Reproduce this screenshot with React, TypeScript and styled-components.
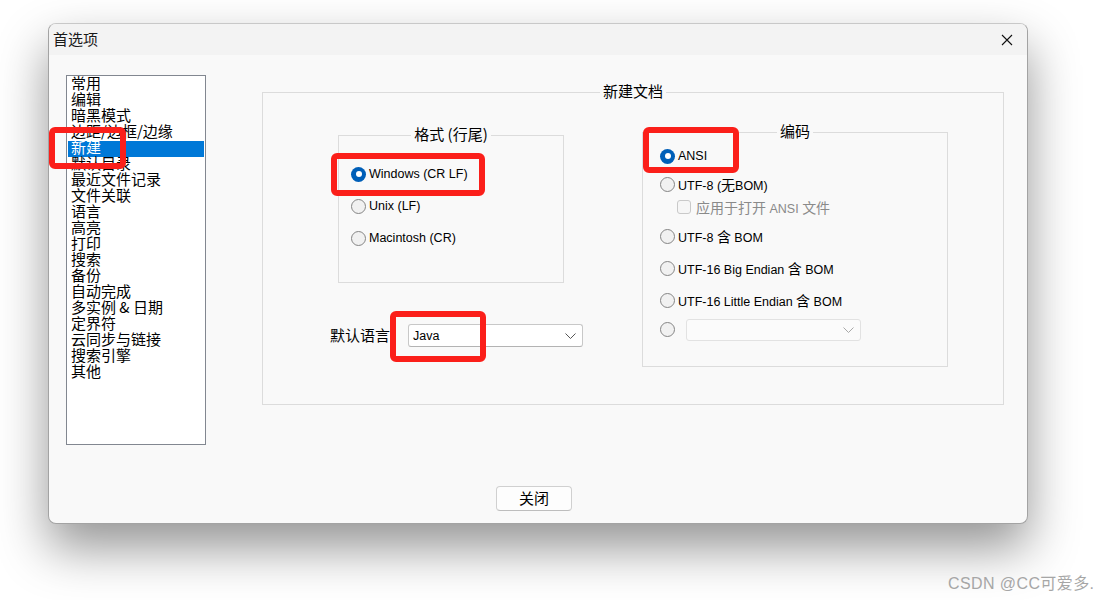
import styled, { createGlobalStyle } from "styled-components";

const GlobalStyle = createGlobalStyle`
  body {
    margin: 0;
    background: #ffffff;
    font-family: "Noto Sans CJK SC", sans-serif;
    color: #000;
  }
`;

const Page = styled.div`
  position: relative;
  width: 1107px;
  height: 600px;
  padding: 23px 0 0 48px;
  box-sizing: border-box;
  overflow: hidden;
`;

const Window = styled.div`
  display: flex;
  flex-direction: column;
  width: 980px;
  height: 501px;
  box-sizing: border-box;
  border: 1px solid #a3a3a3;
  border-top-color: #c8c8c8;
  border-radius: 8px;
  overflow: hidden;
  background: #f9f9f9;
  box-shadow: 0 24px 50px rgba(0, 0, 0, 0.42);
`;

const TitleBar = styled.div`
  display: flex;
  align-items: center;
  justify-content: space-between;
  height: 31px;
  padding: 0 14px 0 4px;
  background: #f3f3f3;
  font-size: 15px;
  color: #1a1a1a;
`;

const TitleText = styled.span`
  line-height: 15px;
  margin-top: -3px;
`;

const CloseIcon = styled.svg`
  width: 12px;
  height: 12px;
`;

const Body = styled.div`
  display: flex;
  flex-direction: column;
  padding-top: 20px;
`;

const TopRow = styled.div`
  display: flex;
  align-items: flex-start;
`;

const ListBox = styled.ul`
  list-style: none;
  margin: 0 0 0 17px;
  padding: 1px;
  width: 140px;
  height: 370px;
  box-sizing: border-box;
  border: 1px solid #828790;
  background: #fff;
`;

const ListItem = styled.li<{ $selected?: boolean }>`
  height: 16px;
  line-height: 12px;
  padding-left: 3px;
  font-size: 15px;
  white-space: nowrap;
  background: ${(p) => (p.$selected ? "#0078d7" : "transparent")};
  color: ${(p) => (p.$selected ? "#fff" : "#000")};
`;

const Group = styled.div<{ $w: number; $h: number }>`
  display: flex;
  flex-direction: column;
  width: ${(p) => p.$w}px;
  height: ${(p) => p.$h}px;
  box-sizing: border-box;
  border: 1px solid #dcdcdc;
  flex-shrink: 0;
`;

const Caption = styled.div`
  align-self: center;
  margin-top: -10px;
  padding: 0 3px;
  height: 18px;
  line-height: 16px;
  font-size: 15px;
  background: #f9f9f9;
  white-space: nowrap;
`;

const MainGroup = styled(Group)`
  margin: 17px 0 0 56px;
`;

const Columns = styled.div`
  display: flex;
  align-items: flex-start;
`;

const LeftColumn = styled.div`
  display: flex;
  flex-direction: column;
  width: 253px;
  margin: 34px 0 0 67px;
`;

const FormatGroup = styled(Group)`
  margin-left: 8px;
`;

const EncodingGroup = styled(Group)`
  margin: 31px 0 0 59px;
`;

const Options = styled.div<{ $pad: number }>`
  display: flex;
  flex-direction: column;
  padding-left: ${(p) => p.$pad}px;
`;

const OptionRow = styled.div<{ $mt: number; $h?: number }>`
  display: flex;
  align-items: center;
  gap: 3px;
  height: ${(p) => p.$h ?? 20}px;
  margin-top: ${(p) => p.$mt}px;
  font-family: "Liberation Sans", "Noto Sans CJK SC", sans-serif;
  font-size: 12.5px;
  white-space: nowrap;
`;

const Label = styled.span`
  white-space: pre;
`;

const Radio = styled.span<{ $checked?: boolean }>`
  position: relative;
  width: 15px;
  height: 15px;
  box-sizing: border-box;
  border-radius: 50%;
  flex-shrink: 0;
  border: ${(p) => (p.$checked ? "none" : "1px solid #858585")};
  background: ${(p) => (p.$checked ? "#005fb8" : "#f1f1f1")};
  &::after {
    content: "";
    display: ${(p) => (p.$checked ? "block" : "none")};
    position: absolute;
    left: 4.5px;
    top: 4.5px;
    width: 6px;
    height: 6px;
    border-radius: 50%;
    background: #fff;
  }
`;

const CheckRow = styled(OptionRow)`
  padding-left: 17px;
  gap: 5px;
  color: #8a8a8a;
`;

const CheckBox = styled.span`
  width: 14px;
  height: 14px;
  box-sizing: border-box;
  border: 1px solid #c9c9c9;
  border-radius: 3px;
  background: #f6f6f6;
`;

const Han = styled.span`
  font-family: "Noto Sans CJK SC", sans-serif;
  font-size: 14px;
`;

const LangRow = styled.div`
  display: flex;
  align-items: center;
  gap: 18px;
  margin-top: 41px;
  font-size: 15px;
`;

const LangLabel = styled.span`
  line-height: 15px;
  margin-top: -3px;
`;

const Combo = styled.div<{ $w: number; $disabled?: boolean }>`
  display: flex;
  align-items: center;
  justify-content: space-between;
  width: ${(p) => p.$w}px;
  height: ${(p) => (p.$disabled ? 22 : 23)}px;
  box-sizing: border-box;
  padding: 0 6px 0 4px;
  border: 1px solid ${(p) => (p.$disabled ? "#e2e2e2" : "#c8c8c8")};
  border-bottom-color: ${(p) => (p.$disabled ? "#e2e2e2" : "#b3b3b3")};
  border-radius: 3px;
  background: ${(p) => (p.$disabled ? "#fbfbfb" : "#ffffff")};
  font-family: "Liberation Sans", sans-serif;
  font-size: 12.5px;
  color: #000;
`;

const DisabledCombo = styled(Combo)`
  margin-left: 8px;
`;

const Chevron = styled.svg<{ $light?: boolean }>`
  width: 11px;
  height: 6px;
  stroke: ${(p) => (p.$light ? "#a8a8a8" : "#555")};
  fill: none;
`;

const Footer = styled.div`
  display: flex;
  padding: 41px 0 0 447px;
`;

const Button = styled.button`
  width: 76px;
  height: 25px;
  padding: 0 0 2px;
  border: 1px solid #d0d0d0;
  border-bottom-color: #bdbdbd;
  border-radius: 4px;
  background: #fdfdfd;
  font-family: "Noto Sans CJK SC", sans-serif;
  font-size: 15px;
  line-height: 15px;
  color: #000;
`;

const Mark = styled.div<{ $x: number; $y: number; $w: number; $h: number }>`
  position: absolute;
  left: ${(p) => p.$x}px;
  top: ${(p) => p.$y}px;
  width: ${(p) => p.$w}px;
  height: ${(p) => p.$h}px;
  box-sizing: border-box;
  border: 6px solid #fb1f1a;
  border-radius: 6px;
  pointer-events: none;
`;

const Watermark = styled.div`
  position: absolute;
  left: 948px;
  top: 570px;
  font-family: "Liberation Sans", "Noto Sans CJK SC", sans-serif;
  font-size: 16px;
  color: #a6a6a6;
  letter-spacing: 0.4px;
`;

const categories = [
  "常用",
  "编辑",
  "暗黑模式",
  "边距/边框/边缘",
  "新建",
  "默认目录",
  "最近文件记录",
  "文件关联",
  "语言",
  "高亮",
  "打印",
  "搜索",
  "备份",
  "自动完成",
  "多实例 & 日期",
  "定界符",
  "云同步与链接",
  "搜索引擎",
  "其他",
];

function ChevronDown({ light }: { light?: boolean }) {
  return (
    <Chevron $light={light} viewBox="0 0 11 6">
      <polyline points="0.5,0.5 5.5,5.5 10.5,0.5" strokeWidth="1" />
    </Chevron>
  );
}

export default function App() {
  return (
    <Page>
      <GlobalStyle />
      <Window>
        <TitleBar>
          <TitleText>首选项</TitleText>
          <CloseIcon viewBox="0 0 12 12">
            <path d="M1 1 L11 11 M11 1 L1 11" stroke="#111" strokeWidth="1.1" />
          </CloseIcon>
        </TitleBar>
        <Body>
          <TopRow>
            <ListBox>
              {categories.map((c) => (
                <ListItem key={c} $selected={c === "新建"}>
                  {c}
                </ListItem>
              ))}
            </ListBox>
            <MainGroup $w={742} $h={313}>
              <Caption>新建文档</Caption>
              <Columns>
                <LeftColumn>
                  <FormatGroup $w={226} $h={148}>
                    <Caption>格式 (行尾)</Caption>
                    <Options $pad={12}>
                      <OptionRow $mt={20}>
                        <Radio $checked />
                        <Label>Windows (CR LF)</Label>
                      </OptionRow>
                      <OptionRow $mt={12}>
                        <Radio />
                        <Label>Unix (LF)</Label>
                      </OptionRow>
                      <OptionRow $mt={12}>
                        <Radio />
                        <Label>Macintosh (CR)</Label>
                      </OptionRow>
                    </Options>
                  </FormatGroup>
                  <LangRow>
                    <LangLabel>默认语言</LangLabel>
                    <Combo $w={175}>
                      <span>Java</span>
                      <ChevronDown />
                    </Combo>
                  </LangRow>
                </LeftColumn>
                <EncodingGroup $w={306} $h={235}>
                  <Caption>编码</Caption>
                  <Options $pad={17}>
                    <OptionRow $mt={5}>
                      <Radio $checked />
                      <Label>ANSI</Label>
                    </OptionRow>
                    <OptionRow $mt={8}>
                      <Radio />
                      <Label>
                        UTF-8 (<Han>无</Han>BOM)
                      </Label>
                    </OptionRow>
                    <CheckRow $mt={3}>
                      <CheckBox />
                      <Label>
                        <Han>应用于打开</Han> ANSI <Han>文件</Han>
                      </Label>
                    </CheckRow>
                    <OptionRow $mt={9}>
                      <Radio />
                      <Label>
                        UTF-8 <Han>含</Han> BOM
                      </Label>
                    </OptionRow>
                    <OptionRow $mt={12}>
                      <Radio />
                      <Label>
                        UTF-16 Big Endian <Han>含</Han> BOM
                      </Label>
                    </OptionRow>
                    <OptionRow $mt={12}>
                      <Radio />
                      <Label>
                        UTF-16 Little Endian <Han>含</Han> BOM
                      </Label>
                    </OptionRow>
                    <OptionRow $mt={8} $h={23}>
                      <Radio />
                      <DisabledCombo $w={175} $disabled>
                        <span />
                        <ChevronDown light />
                      </DisabledCombo>
                    </OptionRow>
                  </Options>
                </EncodingGroup>
              </Columns>
            </MainGroup>
          </TopRow>
          <Footer>
            <Button>关闭</Button>
          </Footer>
        </Body>
      </Window>
      <Mark $x={49} $y={127} $w={77} $h={42} />
      <Mark $x={331} $y={153} $w={154} $h={43} />
      <Mark $x={643} $y={127} $w={96} $h={46} />
      <Mark $x={390} $y={311} $w={96} $h={51} />
      <Watermark>CSDN @CC可爱多.</Watermark>
    </Page>
  );
}
